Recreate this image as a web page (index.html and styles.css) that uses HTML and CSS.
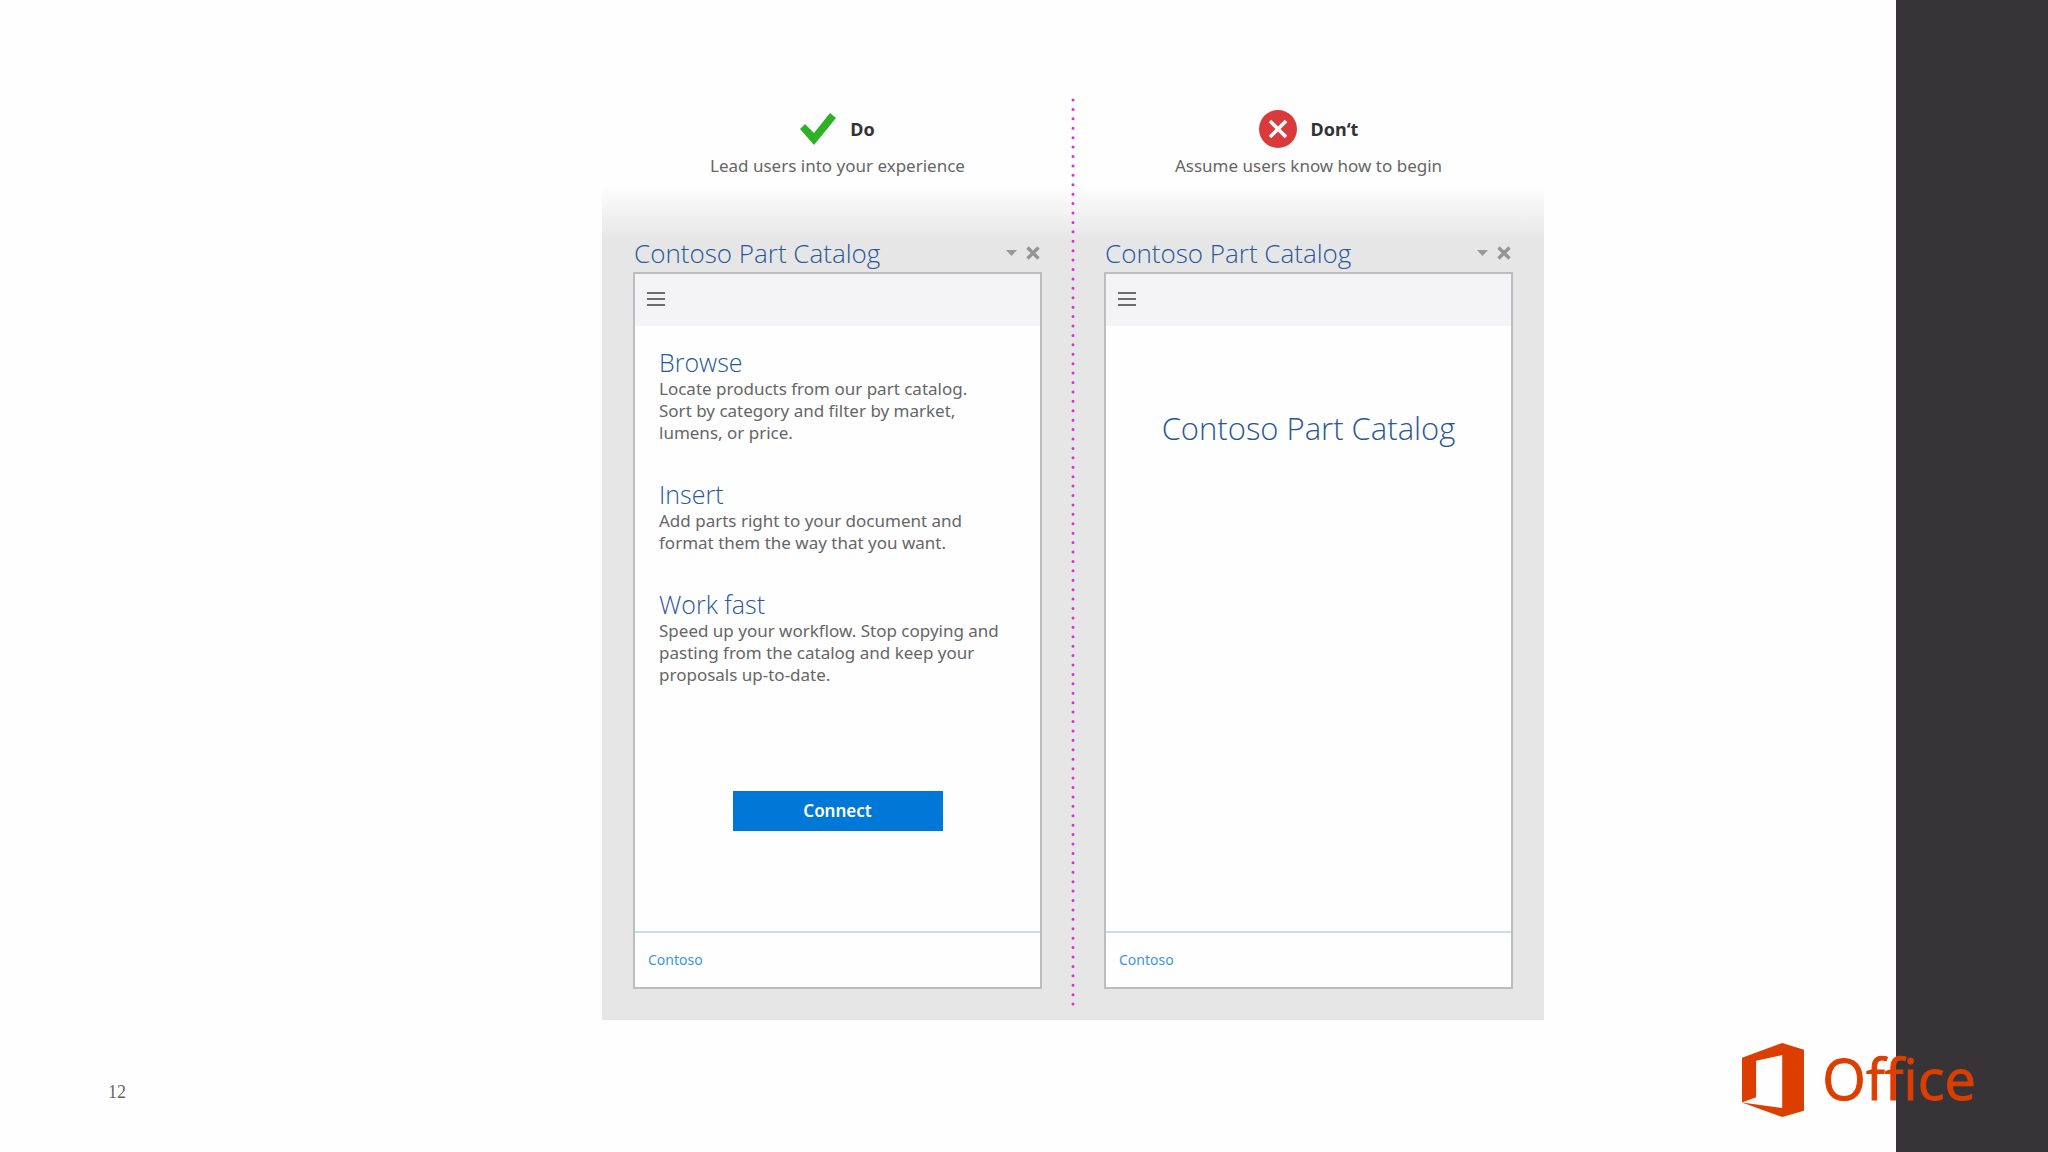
FILE: index.html
```html
<!DOCTYPE html>
<html lang="en">
    <head>
        <meta charset="UTF-8" />
        <title>First run experience: do and don't</title>
        <link rel="stylesheet" href="styles.css">
    </head>

    <body>
        <div class="slide">
            <footer class="page-num">12</footer>

            <main class="compare">
                <!-- Do -->
                <section class="side">
                    <header class="verdict">
                        <h2>
                            <svg width="36" height="32" viewBox="0 0 36 32">
                                <path d="M0 16L5 11L14 20L30 0L36 5L14 32Z" fill="#2fb125" />
                            </svg>
                            Do
                        </h2>
                        <p>Lead users into your experience</p>
                    </header>
                    <div class="task-pane">
                        <div class="title-bar">
                            <h3>Contoso Part Catalog</h3>
                            <button type="button" aria-label="Pane options">
                                <svg width="11" height="6" viewBox="0 0 11 6"><path d="M0 0H11L5.5 6Z" fill="#999" /></svg>
                            </button>
                            <button type="button" aria-label="Close">
                                <svg width="14" height="14" viewBox="0 0 14 14"><path d="M1.5 1.5L12.5 12.5M12.5 1.5L1.5 12.5" stroke="#949494" stroke-width="3.4" /></svg>
                            </button>
                        </div>
                        <div class="pane">
                            <div class="command-bar">
                                <button type="button" aria-label="Menu">
                                    <svg width="18" height="14" viewBox="0 0 18 14"><path d="M0 1H18M0 7H18M0 13H18" stroke="#6c6c6c" stroke-width="2" /></svg>
                                </button>
                            </div>
                            <div class="content">
                                <h4>Browse</h4>
                                <p>Locate products from our part catalog.<br />Sort by category and filter by market,<br />lumens, or price.</p>
                                <h4>Insert</h4>
                                <p>Add parts right to your document and<br />format them the way that you want.</p>
                                <h4>Work fast</h4>
                                <p>Speed up your workflow. Stop copying and<br />pasting from the catalog and keep your<br />proposals up-to-date.</p>
                            </div>
                            <button type="button" class="connect">Connect</button>
                            <div class="brand-bar"><a href="#">Contoso</a></div>
                        </div>
                    </div>
                </section>

                <!-- Don't -->
                <section class="side">
                    <header class="verdict">
                        <h2>
                            <svg width="38" height="38" viewBox="0 0 38 38">
                                <circle cx="19" cy="19" r="19" fill="#da3a3c" />
                                <path d="M11 11L27 27M27 11L11 27" stroke="#fff" stroke-width="3.6" />
                            </svg>
                            Don‘t
                        </h2>
                        <p>Assume users know how to begin</p>
                    </header>
                    <div class="task-pane">
                        <div class="title-bar">
                            <h3>Contoso Part Catalog</h3>
                            <button type="button" aria-label="Pane options">
                                <svg width="11" height="6" viewBox="0 0 11 6"><path d="M0 0H11L5.5 6Z" fill="#999" /></svg>
                            </button>
                            <button type="button" aria-label="Close">
                                <svg width="14" height="14" viewBox="0 0 14 14"><path d="M1.5 1.5L12.5 12.5M12.5 1.5L1.5 12.5" stroke="#949494" stroke-width="3.4" /></svg>
                            </button>
                        </div>
                        <div class="pane">
                            <div class="command-bar">
                                <button type="button" aria-label="Menu">
                                    <svg width="18" height="14" viewBox="0 0 18 14"><path d="M0 1H18M0 7H18M0 13H18" stroke="#6c6c6c" stroke-width="2" /></svg>
                                </button>
                            </div>
                            <h4 class="splash">Contoso Part Catalog</h4>
                            <div class="brand-bar"><a href="#">Contoso</a></div>
                        </div>
                    </div>
                </section>

                <!-- 96 gaps between the dots, whatever the height -->
                <svg class="divider" aria-hidden="true">
                    <line x1="2" y1="0" x2="2" y2="100%" pathLength="96.1" />
                </svg>
            </main>

            <aside class="band"></aside>

            <div class="logo">
                <svg width="62" height="74" viewBox="0 0 185 221">
                    <path d="M0 44L120 0L185 20V202L120 221L0 178L120 194V36L42 53V162L0 178Z" fill="#dc3e00" />
                </svg>
                <span>Office</span>
            </div>
        </div>
    </body>
</html>
```
FILE: styles.css
```css
* {
    box-sizing: border-box;
}

body,
h2,
h3,
h4,
p {
    margin: 0;
}

body {
    font: 17px/22px "Noto Sans", "Open Sans", sans-serif;
    color: #666;
    background: #fefefe;
}

button {
    padding: 0;
    border: 0;
    background: none;
    font: inherit;
    cursor: pointer;
}

svg {
    display: block;
}

.slide {
    position: relative;
    display: grid;
    grid-template-columns: 602fr 942fr 352fr 152fr;
    min-height: 100vh;
}

.page-num {
    align-self: end;
    padding: 0 0 49px 108px;
    font: 18px/22px "Liberation Serif", serif;
}

.band {
    grid-column: 4;
    background: #373438;
}

/* comparison */
.compare {
    position: relative;
    display: grid;
    grid-template-columns: 1fr 1fr;
    padding-top: 99px;
    padding-bottom: 132px;
}

.side {
    display: flex;
    flex-direction: column;
}

.verdict {
    padding: 11px 0 0;
    text-align: center;
}

.verdict h2 {
    display: flex;
    justify-content: center;
    align-items: center;
    gap: 14px;
    height: 38px;
    font-size: 18px;
    color: #333;
}

.verdict p {
    margin-top: 7px;
}

.divider {
    position: absolute;
    top: 100px;
    left: 50%;
    width: 4px;
    height: 905px;
    overflow: visible;
    transform: translateX(-50%);
}

.divider line {
    stroke: #d631d6;
    stroke-width: 3;
    stroke-linecap: round;
    stroke-dasharray: 0 1;
}

/* task pane */
.task-pane {
    display: flex;
    flex: 1;
    flex-direction: column;
    padding: 57px 31px 31px;
    background: linear-gradient(#fefefe 8px, #e6e6e7 64px);
}

.title-bar {
    display: flex;
    align-items: center;
    gap: 9px;
    height: 38px;
    padding: 0 2px 0 1px;
}

.title-bar h3 {
    flex: 1;
    font-family: "Open Sans", sans-serif;
    font-size: 26px;
    font-weight: 300;
    color: #2b579a;
}

.pane {
    display: flex;
    flex: 1;
    flex-direction: column;
    border: 2px solid #bdbdbe;
    background: #fefefe;
}

.command-bar {
    display: flex;
    align-items: center;
    height: 52px;
    padding: 0 12px 2px;
    background: #f4f3f5;
}

.content {
    padding: 20px 20px 0 24px;
}

.content h4 {
    font-family: "Open Sans", sans-serif;
    font-size: 25px;
    line-height: 32px;
    font-weight: 300;
    color: #2b579a;
}

.content p + h4 {
    margin-top: 34px;
}

.connect {
    align-self: center;
    width: 210px;
    height: 40px;
    margin-top: 105px;
    background: #0078d7;
    color: #fff;
    font-weight: 600;
}

.splash {
    margin-top: 82px;
    font-family: "Open Sans", sans-serif;
    font-size: 31px;
    line-height: 40px;
    font-weight: 300;
    text-align: center;
    color: #2b579a;
}

.brand-bar {
    margin-top: auto;
    padding: 16px 13px;
    border-top: 2px solid #c6dcec;
    font-size: 14px;
}

.brand-bar a {
    color: #3c96dc;
    text-decoration: none;
}

/* lies half over the dark band */
.logo {
    position: absolute;
    right: 72px;
    bottom: 35px;
    display: flex;
    align-items: center;
    gap: 18px;
    font-family: "Open Sans", sans-serif;
    font-size: 56px;
    line-height: 70px;
    font-variant-ligatures: none;
    -webkit-text-stroke: 1px #dc3e00;
    color: #dc3e00;
}

.logo span {
    padding-bottom: 4px;
}
```
